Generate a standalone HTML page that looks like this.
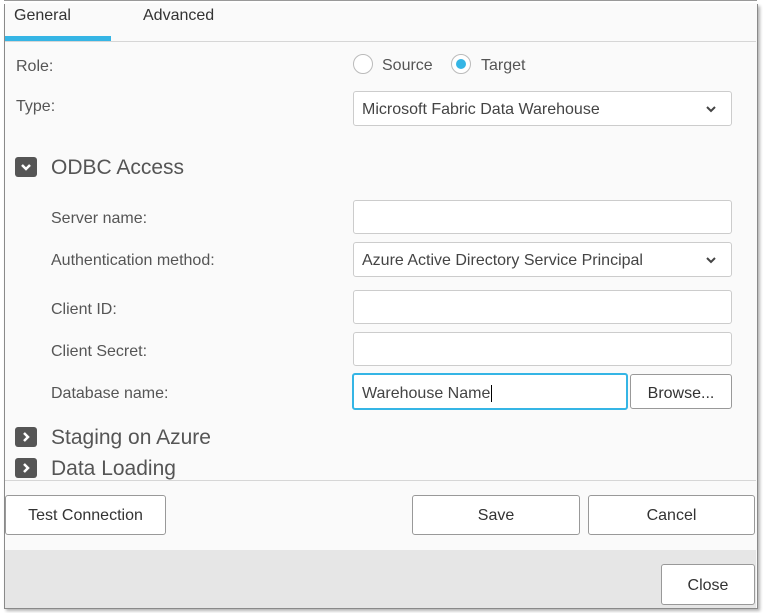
<!DOCTYPE html>
<html><head><style>
body{margin:0;width:763px;height:613px;background:#fff;font-family:"Liberation Sans",sans-serif;position:relative;overflow:hidden;color:#444}
.a{position:absolute}
.frame{left:4px;top:4px;width:752px;height:604px;border:1px solid #8a8a8a;border-top:none;background:#fafafa;box-shadow:2px 2px 3px rgba(0,0,0,.3)}
.t{font-size:16px;color:#555}
.in{background:#fff;border:1px solid #ccc;border-radius:3px;box-sizing:border-box;font-size:16px;color:#444;padding-left:8px;line-height:35px}
.btn{background:#fff;border:1px solid #999;border-radius:3px;box-sizing:border-box;font-size:16px;color:#333;text-align:center}
.hd{font-size:21px;color:#555}
.ic{width:22px;height:20px;background:#555;border-radius:3px}
.chev{position:absolute;right:14px;top:11px}
</style></head><body>
<div class="a frame"></div>
<div class="a" style="left:4px;top:0;width:753px;height:1px;background:#999"></div>
<div class="a t" style="left:14px;top:7px;color:#333">General</div>
<div class="a t" style="left:143px;top:7px;color:#333">Advanced</div>
<div class="a" style="left:5px;top:41px;width:751px;height:1px;background:#d6d6d6"></div>
<div class="a" style="left:5px;top:36px;width:106px;height:5px;background:#35b5e5"></div>
<div class="a t" style="left:16px;top:58px">Role:</div>
<div class="a" style="left:353px;top:54px;width:18px;height:18px;border:1px solid #bbb;border-radius:50%;background:#fff"></div>
<div class="a t" style="left:382px;top:57px">Source</div>
<div class="a" style="left:451px;top:54px;width:18px;height:18px;border:1px solid #bbb;border-radius:50%;background:#fff"></div>
<div class="a" style="left:456px;top:59px;width:10px;height:10px;border-radius:50%;background:#35b5e5"></div>
<div class="a t" style="left:481px;top:57px">Target</div>
<div class="a t" style="left:16px;top:98px">Type:</div>
<div class="a in" style="left:353px;top:91px;width:379px;height:35px">Microsoft Fabric Data Warehouse<svg class="chev" width="12" height="12" viewBox="0 0 12 12"><path d="M2 4l4 4 4-4" stroke="#444" stroke-width="2" fill="none"/></svg></div>
<div class="a ic" style="left:15px;top:157px"><svg width="22" height="20" viewBox="0 0 22 20"><path d="M7 8l4 4 4-4" stroke="#fff" stroke-width="2.5" fill="none"/></svg></div>
<div class="a hd" style="left:51px;top:156px">ODBC Access</div>
<div class="a t" style="left:51px;top:210px">Server name:</div>
<div class="a in" style="left:353px;top:200px;width:379px;height:34px"></div>
<div class="a t" style="left:51px;top:252px">Authentication method:</div>
<div class="a in" style="left:353px;top:242px;width:379px;height:35px">Azure Active Directory Service Principal<svg class="chev" width="12" height="12" viewBox="0 0 12 12"><path d="M2 4l4 4 4-4" stroke="#444" stroke-width="2" fill="none"/></svg></div>
<div class="a t" style="left:51px;top:301px">Client ID:</div>
<div class="a in" style="left:353px;top:290px;width:379px;height:34px"></div>
<div class="a t" style="left:51px;top:343px">Client Secret:</div>
<div class="a in" style="left:353px;top:332px;width:379px;height:34px"></div>
<div class="a t" style="left:51px;top:385px">Database name:</div>
<div class="a in" style="left:352px;top:373px;width:276px;height:37px;border:2px solid #35b5e5;padding-left:8px;line-height:37px">Warehouse Name<span style="border-left:1px solid #000;margin-left:1px"></span></div>
<div class="a btn" style="left:630px;top:374px;width:102px;height:35px;line-height:37px">Browse...</div>
<div class="a ic" style="left:15px;top:427px"><svg width="22" height="20" viewBox="0 0 22 20"><path d="M9 6l4 4-4 4" stroke="#fff" stroke-width="2.5" fill="none"/></svg></div>
<div class="a hd" style="left:51px;top:426px">Staging on Azure</div>
<div class="a ic" style="left:15px;top:458px"><svg width="22" height="20" viewBox="0 0 22 20"><path d="M9 6l4 4-4 4" stroke="#fff" stroke-width="2.5" fill="none"/></svg></div>
<div class="a hd" style="left:51px;top:457px">Data Loading</div>
<div class="a" style="left:5px;top:480px;width:751px;height:1px;background:#d6d6d6"></div>
<div class="a btn" style="left:5px;top:495px;width:161px;height:40px;line-height:40px">Test Connection</div>
<div class="a btn" style="left:412px;top:495px;width:168px;height:40px;line-height:40px">Save</div>
<div class="a btn" style="left:588px;top:495px;width:167px;height:40px;line-height:40px">Cancel</div>
<div class="a" style="left:5px;top:550px;width:751px;height:58px;background:#e6e6e6"></div>
<div class="a btn" style="left:661px;top:564px;width:94px;height:41px;line-height:41px">Close</div>
</body></html>
